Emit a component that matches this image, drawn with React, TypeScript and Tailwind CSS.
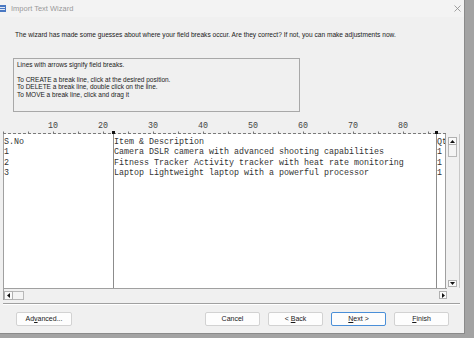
import React from "react";

const rows: [string, string, string][] = [
  ["S.No", "Item & Description", "Qty"],
  ["1", "Camera DSLR camera with advanced shooting capabilities", "1"],
  ["2", "Fitness Tracker Activity tracker with heat rate monitoring", "1"],
  ["3", "Laptop Lightweight laptop with a powerful processor", "1"],
];

function Tri({ dir }: { dir: "up" | "down" | "left" | "right" }) {
  const pts =
    dir === "up"
      ? "0,3 2.5,0 5,3"
      : dir === "down"
      ? "0,0 5,0 2.5,3"
      : dir === "left"
      ? "3,0 3,5 0,2.5"
      : "0,0 0,5 3,2.5";
  const w = dir === "up" || dir === "down" ? 5 : 3;
  const h = dir === "up" || dir === "down" ? 3 : 5;
  return (
    <svg width={w} height={h} viewBox={`0 0 ${w} ${h}`}>
      <polygon points={pts} fill="#111" />
    </svg>
  );
}

function Btn({ children, focus }: { children: React.ReactNode; focus?: boolean }) {
  return (
    <div
      className={
        "h-[14px] w-[55px] flex items-center justify-center rounded-[2px] bg-[#fdfdfd] text-[7px] text-[#1a1a1a] " +
        (focus ? "border border-[#4a8fd8]" : "border border-[#d2d2d2]")
      }
    >
      {children}
    </div>
  );
}

export default function App() {
  const ticks: number[] = [];
  for (let i = 0; i <= 88; i += 5) ticks.push(3 + i * 5);
  return (
    <div className="w-[474px] h-[338px] bg-[#a3a3a3] overflow-hidden font-['Liberation_Sans',Arial,sans-serif]">
      <div className="w-[465px] h-[334px] bg-[#f0f0f0] border-r border-b border-[#8a8a8a] flex flex-col">
        {/* Title bar */}
        <div className="h-[17px] flex items-center bg-[#f3f3f3] shrink-0">
          <svg width="7" height="7" viewBox="0 0 7 7" className="ml-[-1px]">
            <rect x="0" y="0" width="7" height="7" fill="#4a78c2" />
            <rect x="1" y="2" width="5" height="1" fill="#dfe8f7" />
            <rect x="1" y="4" width="5" height="1" fill="#dfe8f7" />
          </svg>
          <span className="ml-[5px] text-[7.5px] text-[#9a9a9a]">Import Text Wizard</span>
          <svg width="7" height="7" viewBox="0 0 7 7" className="ml-auto mr-[3px]">
            <path d="M0.5 0.5 L6.5 6.5 M6.5 0.5 L0.5 6.5" stroke="#8a8a8a" strokeWidth="0.8" />
          </svg>
        </div>

        {/* Description */}
        <div className="mt-[13px] ml-[15px] text-[6.6px] leading-[9px] text-[#1a1a1a] whitespace-nowrap">
          The wizard has made some guesses about where your field breaks occur. Are they correct? If not, you can make adjustments now.
        </div>

        {/* Info box */}
        <div className="mt-[19px] ml-[13px] w-[287px] h-[54px] border border-[#a8a8a8] pl-[3px] pt-[2px] text-[6.5px] leading-[7.5px] text-[#1a1a1a] shrink-0">
          <div>Lines with arrows signify field breaks.</div>
          <div className="mt-[7px]">To CREATE a break line, click at the desired position.</div>
          <div>To DELETE a break line, double click on the line.</div>
          <div>To MOVE a break line, click and drag it</div>
        </div>

        {/* Ruler */}
        <div className="h-[22px] shrink-0 flex flex-col font-['Liberation_Mono',monospace] text-[8.33px] text-[#444]">
          <div className="h-[19px] pt-[9.5px] pl-[28px] flex leading-[9px]">
            {[10, 20, 30, 40, 50, 60, 70, 80].map((n) => (
              <div key={n} className="w-[50px] text-center">
                {n}
              </div>
            ))}
          </div>
          <svg width="460" height="3" viewBox="0 0 460 3">
            <line x1="3" y1="2.5" x2="446" y2="2.5" stroke="#7a7a7a" strokeWidth="1" strokeDasharray="3 2" />
            {ticks.map((x) => (
              <line key={x} x1={x + 0.5} y1="0.5" x2={x + 0.5} y2="3" stroke="#7a7a7a" strokeWidth="1" />
            ))}
            <rect x="112" y="0" width="3" height="3" fill="#111" />
            <rect x="435" y="0" width="3" height="3" fill="#111" />
          </svg>
        </div>

        {/* Grid */}
        <div className="ml-[3px] w-[457px] h-[154px] flex shrink-0">
          <div className="w-[443px] h-full bg-white border-l border-r border-[#a0a0a0] flex font-['Liberation_Mono',monospace] text-[8.33px] leading-[10.3px] text-[#333] overflow-hidden">
            <div className="w-[109px] h-full pt-[3px] overflow-hidden whitespace-nowrap">
              {rows.map((r, i) => (
                <div key={i}>{r[0]}</div>
              ))}
            </div>
            <div className="w-[323px] h-full pt-[3px] border-l border-[#8c8c8c] overflow-hidden whitespace-nowrap">
              {rows.map((r, i) => (
                <div key={i}>{r[1]}</div>
              ))}
            </div>
            <div className="w-[9px] h-full pt-[3px] border-l border-[#8c8c8c] overflow-hidden whitespace-nowrap">
              {rows.map((r, i) => (
                <div key={i}>{r[2]}</div>
              ))}
            </div>
          </div>
          {/* vertical scrollbar */}
          <div className="w-[14px] h-full border-r border-[#c8c8c8] flex flex-col items-center pt-[3px] pb-[1px] bg-[#f0f0f0]">
            <div className="w-[9px] h-[8px] border border-[#b0b0b0] bg-[#fafafa] flex items-center justify-center">
              <Tri dir="up" />
            </div>
            <div className="w-[9px] h-[12px] border border-t-0 border-[#b8b8b8] bg-[#f4f4f4]" />
            <div className="mt-auto w-[9px] h-[7px] border border-[#b0b0b0] bg-[#fafafa] flex items-center justify-center">
              <Tri dir="down" />
            </div>
          </div>
        </div>

        {/* Horizontal scrollbar */}
        <div className="ml-[3px] w-[444px] h-[12px] border-l border-t border-[#a0a0a0] flex items-end shrink-0">
          <div className="w-[9px] h-[9px] border border-[#b0b0b0] bg-[#fafafa] flex items-center justify-center">
            <Tri dir="left" />
          </div>
          <div className="w-[11px] h-[9px] border border-l-0 border-[#b8b8b8] bg-[#f4f4f4]" />
          <div className="ml-auto mb-[1px] w-[8px] h-[8px] border border-[#b0b0b0] bg-[#fafafa] flex items-center justify-center">
            <Tri dir="right" />
          </div>
        </div>

        {/* Separator */}
        <div className="mt-[3px] ml-[3px] w-[457px] h-[2px] border-t border-[#a0a0a0] border-b border-b-white shrink-0" />

        {/* Buttons */}
        <div className="mt-[7px] flex items-center shrink-0">
          <div className="ml-[16px] w-[56px]">
            <div className="h-[14px] w-[56px] flex items-center justify-center rounded-[2px] bg-[#fdfdfd] text-[7px] text-[#1a1a1a] border border-[#d2d2d2]">
              <span>
                Ad<span className="underline">v</span>anced...
              </span>
            </div>
          </div>
          <div className="ml-[133px] flex gap-[8px]">
            <Btn>Cancel</Btn>
            <Btn>
              <span>
                &lt; <span className="underline">B</span>ack
              </span>
            </Btn>
            <Btn focus>
              <span>
                <span className="underline">N</span>ext &gt;
              </span>
            </Btn>
            <Btn>
              <span>
                <span className="underline">F</span>inish
              </span>
            </Btn>
          </div>
        </div>
      </div>
    </div>
  );
}
